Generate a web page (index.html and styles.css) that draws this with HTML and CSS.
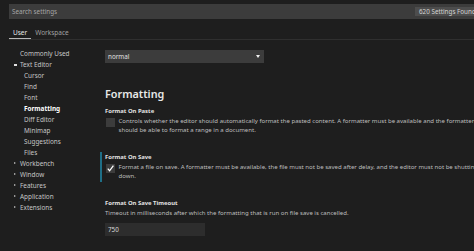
FILE: index.html
```html
<!DOCTYPE html>
<html lang="en">
<head>
<meta charset="UTF-8">
<title>Settings</title>
<link rel="stylesheet" href="styles.css">
</head>
<body>
<div class="page">
  <div class="header">
    <div class="search">
      <span class="placeholder">Search settings</span>
      <span class="badge">620 Settings Found</span>
    </div>
    <div class="tabs">
      <div class="tab active">User</div>
      <div class="tab">Workspace</div>
    </div>
  </div>

  <div class="main">
    <div class="tree">
      <div class="node">Commonly Used</div>
      <div class="node open"><span class="twisty down"></span>Text Editor</div>
      <div class="node child">Cursor</div>
      <div class="node child">Find</div>
      <div class="node child">Font</div>
      <div class="node child selected">Formatting</div>
      <div class="node child">Diff Editor</div>
      <div class="node child">Minimap</div>
      <div class="node child">Suggestions</div>
      <div class="node child">Files</div>
      <div class="node"><span class="twisty"></span>Workbench</div>
      <div class="node"><span class="twisty"></span>Window</div>
      <div class="node"><span class="twisty"></span>Features</div>
      <div class="node"><span class="twisty"></span>Application</div>
      <div class="node"><span class="twisty"></span>Extensions</div>
    </div>

    <div class="content">
      <div class="select">
        <span>normal</span>
        <span class="arrow"></span>
      </div>

      <h2 class="group-title">Formatting</h2>

      <div class="setting">
        <div class="label">Format On Paste</div>
        <div class="row">
          <span class="checkbox"></span>
          <div class="desc">Controls whether the editor should automatically format the pasted content. A formatter must be available and the formatter<br>should be able to format a range in a document.</div>
        </div>
      </div>

      <div class="setting focused">
        <div class="label">Format On Save</div>
        <div class="row">
          <span class="checkbox">
            <svg width="9" height="9" viewBox="0 0 9 9"><path d="M1.8 4.6 L3.6 6.8 L7.4 1.6" fill="none" stroke="#fff" stroke-width="1.3"/></svg>
          </span>
          <div class="desc">Format a file on save. A formatter must be available, the file must not be saved after delay, and the editor must not be shutting<br>down.</div>
        </div>
      </div>

      <div class="setting">
        <div class="label">Format On Save Timeout</div>
        <div class="desc plain">Timeout in milliseconds after which the formatting that is run on file save is cancelled.</div>
        <div class="input">750</div>
      </div>
    </div>
  </div>
</div>
</body>
</html>
```

FILE: styles.css
```css
* { margin: 0; padding: 0; box-sizing: border-box; }

html, body {
  overflow: hidden;
  background: #1e1e1e;
}

body {
  font-family: "Noto Sans", "Open Sans", sans-serif;
  color: #cccccc;
}

.page {
  width: 700px;
  height: 251px;
}

/* header */
.header {
  padding: 4px 0 0 9px;
}

.search {
  display: flex;
  align-items: center;
  height: 15px;
  background: #3c3c3c;
  padding-left: 3px;
  font-size: 6.3px;
}

.placeholder {
  flex: 0 0 403px;
  color: #a6a6a6;
}

.badge {
  background: #4d4d4d;
  color: #d4d4d4;
  padding: 0 4px;
  line-height: 9px;
  height: 9px;
}

.tabs {
  display: flex;
  height: 21px;
  border-bottom: 1px solid #2f2f2f;
  font-size: 6.5px;
  padding-top: 8px;
}

.tab {
  padding: 0 4px;
  line-height: 11px;
  height: 12px;
  color: #a0a0a0;
}

.tab.active {
  color: #e6e6e6;
  border-bottom: 1px solid #b8b8b8;
}

/* body */
.main {
  display: flex;
}

.tree {
  width: 96px;
  padding-top: 8px;
  font-size: 6.4px;
}

.node {
  position: relative;
  height: 11px;
  line-height: 11px;
  padding-left: 20px;
  color: #c6c6c6;
  white-space: nowrap;
}

.node.child {
  padding-left: 24px;
}

.node.selected {
  color: #ffffff;
  font-weight: 700;
}

.twisty {
  position: absolute;
  left: 14px;
  top: 4px;
  width: 0;
  height: 0;
  border-top: 1.5px solid transparent;
  border-bottom: 1.5px solid transparent;
  border-left: 2.5px solid #c0c0c0;
}

.twisty.down {
  left: 14px;
  top: 4.5px;
  border: none;
  width: 2.5px;
  height: 2.5px;
  background: #e0e0e0;
}

.content {
  flex: 1;
  padding: 10px 0 0 9px;
}

.select {
  display: flex;
  align-items: center;
  justify-content: space-between;
  width: 159px;
  height: 13px;
  background: #3c3c3c;
  padding: 0 4px 0 3px;
  font-size: 6.3px;
  color: #e0e0e0;
}

.arrow {
  width: 0;
  height: 0;
  border-left: 2px solid transparent;
  border-right: 2px solid transparent;
  border-top: 3px solid #f0f0f0;
}

.group-title {
  margin-top: 23px;
  font-size: 10.8px;
  line-height: 16px;
  font-weight: 600;
  color: #e8e8e8;
}

.setting {
  margin: 4px 0 16px -5px;
  padding: 1px 0 1px 3px;
  border-left: 2px solid transparent;
  white-space: nowrap;
}

.setting.focused {
  border-left-color: #1f6f87;
}

.label {
  font-size: 5.9px;
  line-height: 9px;
  font-weight: 700;
  color: #e2e2e2;
}

.row {
  display: flex;
  margin-top: 1px;
}

.checkbox {
  flex: 0 0 9px;
  width: 9px;
  height: 9px;
  margin: 0.5px 4px 0 0.5px;
  background: #3c3c3c;
}

.checkbox svg {
  display: block;
}

.desc {
  font-size: 6.05px;
  line-height: 9px;
  color: #bdbdbd;
}

.desc.plain {
  margin-top: 1px;
}

.input {
  margin-top: 5px;
  width: 100px;
  height: 13px;
  line-height: 13px;
  background: #2d2d2d;
  padding-left: 3px;
  font-size: 6.3px;
  color: #d8d8d8;
}
```
